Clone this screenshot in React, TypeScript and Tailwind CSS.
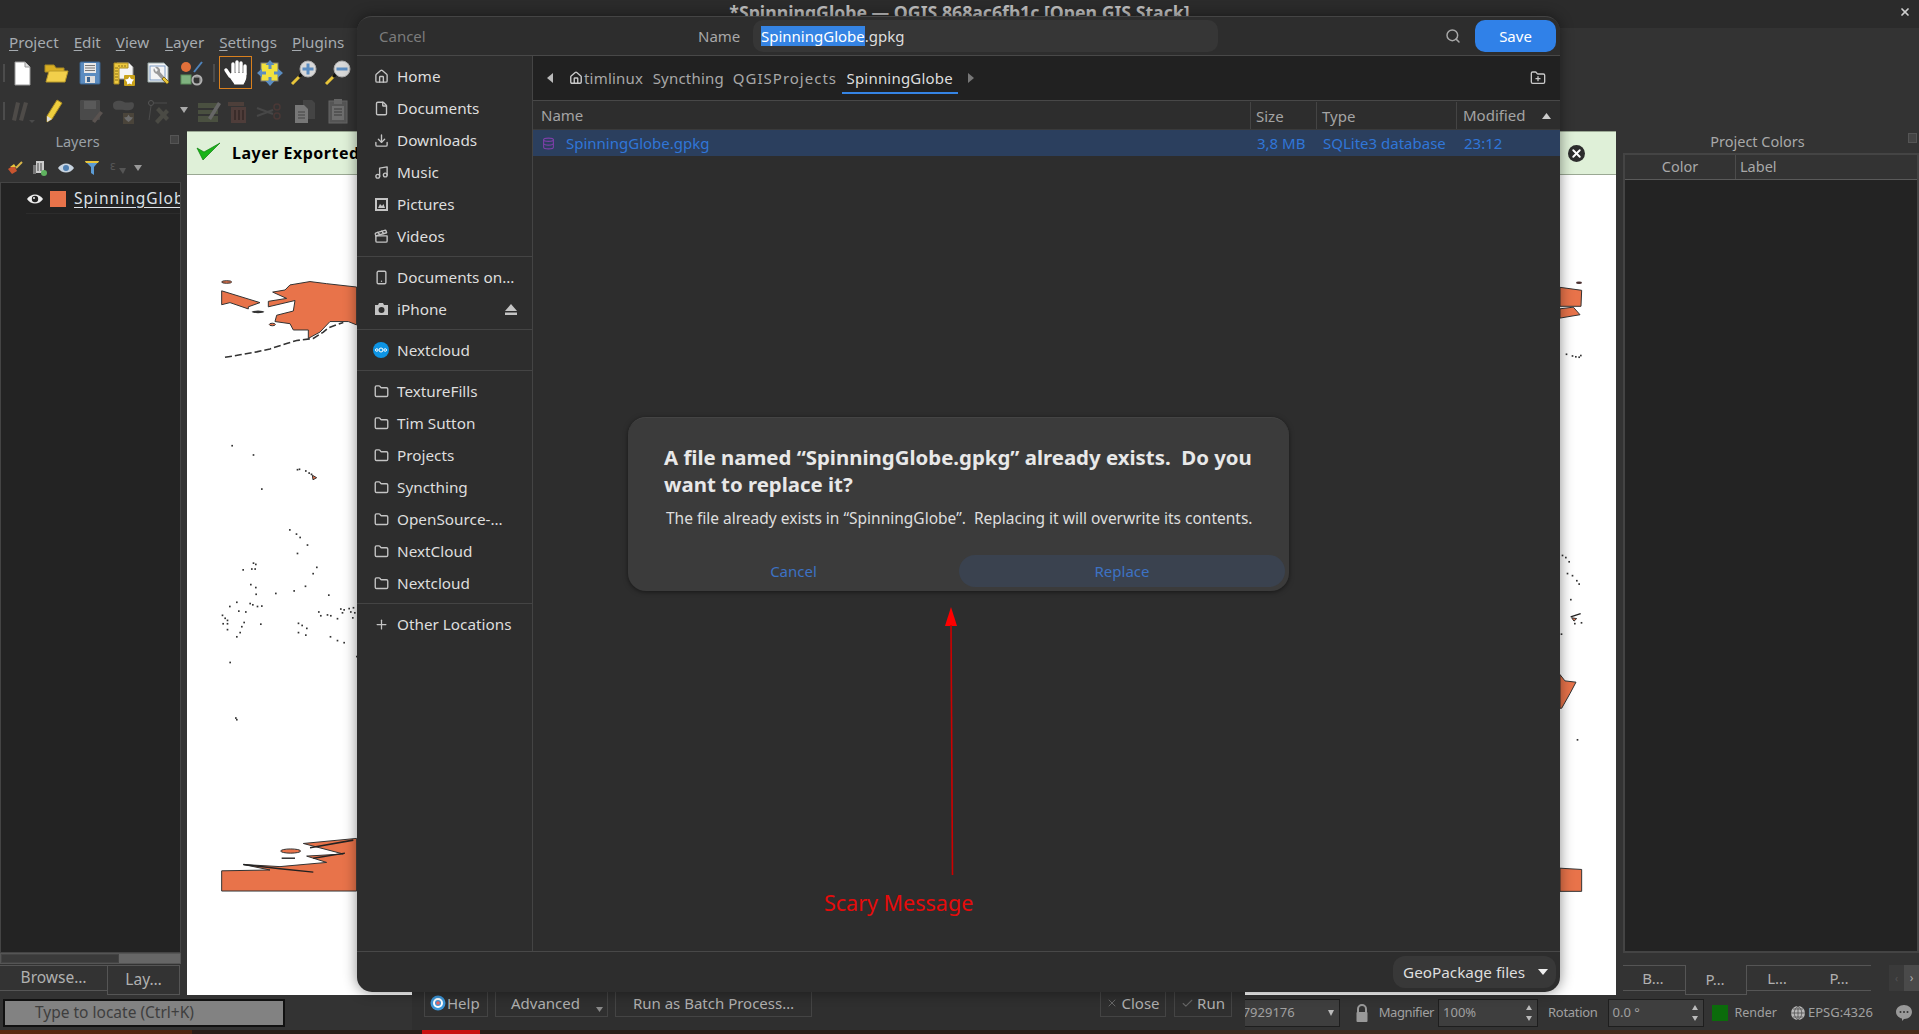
import React from "react";
import { House, File, Download, Music, Smartphone, Folder, Plus, Search, FolderPlus, Database, X, Check, Clapperboard } from "lucide-react";

const FONT = "[font-family:'Noto_Sans','Open_Sans',sans-serif]";

const MAP_DOTS: [number, number][] = [[154,463],[218,485],[243,566],[327,663],[347,673],[358,681],[380,699],[350,719],[408,752],[397,767],[218,742],[225,745],[187,758],[213,756],[223,756],[210,793],[225,800],[226,816],[285,814],[340,808],[374,797],[444,818],[208,838],[216,841],[230,845],[243,844],[147,845],[168,835],[174,856],[195,858],[125,866],[133,873],[140,878],[127,886],[140,886],[190,883],[183,893],[240,887],[178,907],[140,900],[168,917],[353,885],[364,890],[378,897],[353,907],[375,913],[414,858],[420,867],[440,865],[450,867],[470,874],[480,851],[490,853],[505,850],[518,848],[510,858],[522,860],[485,860],[516,872],[449,917],[470,926],[490,931],[528,964],[148,978],[165,1110],[168,1114],[350,520],[356,519],[375,523],[385,528],[392,531]];
const MAP_DOTS_R: [number, number][] = [[47,222],[65,226],[75,228],[85,229],[90,225],[35,700],[45,705],[55,715],[50,743],[65,748],[78,760],[85,768],[60,805],[32,887],[80,1138],[92,860],[72,862]];

function WorldMap() {
  const shape = "fill-[#e8734a] stroke-[#333]";
  return (
    <svg className="absolute left-0 top-0 h-[864px] w-[1428px]" viewBox="187 131 1428 864">
      <g transform="translate(180 250) scale(0.3333 0.4209)">
        <polygon vectorEffect="non-scaling-stroke" className={shape} points="278,100 315,95 330,83 390,75 440,80 530,88 530,178 505,170 450,170 420,195 385,210 385,190 340,190 330,175 285,170 290,155 340,145 345,120 265,135 265,122 320,115" />
        <polygon vectorEffect="non-scaling-stroke" className={shape} points="125,97 240,125 205,135 205,140 150,125 125,130" />
        <ellipse vectorEffect="non-scaling-stroke" className={shape} cx="140" cy="76" rx="15" ry="3" />
        <ellipse vectorEffect="non-scaling-stroke" cx="234" cy="147" rx="19" ry="3" fill="#333" />
        <ellipse vectorEffect="non-scaling-stroke" cx="277" cy="177" rx="9" ry="3" fill="#e8734a" stroke="#333" />
        <polyline vectorEffect="non-scaling-stroke" fill="none" stroke="#333" strokeWidth="1.6" strokeDasharray="7 3" points="135,255 180,249 230,242 270,235 320,222 350,215 400,210 430,195 445,185 490,172" />
        <polygon vectorEffect="non-scaling-stroke" className={shape} points="397,535 410,541 399,546" />
        <polygon vectorEffect="non-scaling-stroke" className={shape} points="125,1475 270,1473 190,1460 300,1465 440,1455 380,1440 490,1435 370,1410 530,1398 530,1523 125,1523" />
        <ellipse vectorEffect="non-scaling-stroke" className={shape} cx="332" cy="1428" rx="30" ry="5" />
        <polyline vectorEffect="non-scaling-stroke" fill="none" stroke="#222" strokeWidth="1.4" points="190,1460 300,1470 400,1478" />
        <polyline vectorEffect="non-scaling-stroke" fill="none" stroke="#222" strokeWidth="1.6" points="390,1420 420,1416 520,1402" />
        <polyline vectorEffect="non-scaling-stroke" fill="none" stroke="#222" strokeWidth="1.4" points="400,1445 495,1433" />
        <polyline vectorEffect="non-scaling-stroke" fill="none" stroke="#222" strokeWidth="1.4" points="305,1445 345,1445" />
        {MAP_DOTS.map(([x, y], i) => (
          <rect key={i} x={x} y={y} width="5" height="4" fill="#333" />
        ))}
      </g>
      <g transform="translate(1550 260) scale(0.3333 0.4209)">
        <polygon vectorEffect="non-scaling-stroke" className={shape} points="30,65 95,72 93,110 30,110" />
        <polygon vectorEffect="non-scaling-stroke" className={shape} points="30,116 70,112 90,130 30,138" />
        <ellipse vectorEffect="non-scaling-stroke" cx="87" cy="54" rx="9" ry="3" fill="#4a3030" />
        <polygon vectorEffect="non-scaling-stroke" className={shape} points="30,985 45,1000 78,1003 60,1030 35,1065 30,1065" />
        <polygon vectorEffect="non-scaling-stroke" className={shape} points="65,850 80,852 72,858" />
        <polyline vectorEffect="non-scaling-stroke" fill="none" stroke="#222" strokeWidth="1.4" points="62,848 92,840" />
        <polygon vectorEffect="non-scaling-stroke" className={shape} points="30,1445 95,1448 95,1500 30,1500" />
        {MAP_DOTS_R.map(([x, y], i) => (
          <rect key={i} x={x} y={y} width="5" height="4" fill="#333" />
        ))}
      </g>
    </svg>
  );
}

function Sep() {
  return <div className="h-[18px] w-[2px] bg-[#4c4c4c]" />;
}

function Cell({ children, className = "" }: { children?: React.ReactNode; className?: string }) {
  return <div className={`flex h-[34px] w-[34px] shrink-0 items-center justify-center ${className}`}>{children}</div>;
}

function Ic({ children, w = 26 }: { children: React.ReactNode; w?: number }) {
  return (
    <svg width={w} height={26} viewBox={`0 0 ${w} 26`}>
      {children}
    </svg>
  );
}

function ZoomIcon({ minus }: { minus?: boolean }) {
  return (
    <Ic w={30}>
      <line x1="3" y1="24" x2="11" y2="16" stroke="#e8c53a" strokeWidth="3" />
      <line x1="10" y1="17" x2="13" y2="14" stroke="#111" strokeWidth="3" />
      <circle cx="19" cy="9" r="8" fill="#d8d8d8" stroke="#aaa" />
      <rect x="13.5" y="7.5" width="11" height="3" fill="#5b8cc0" />
      {!minus && <rect x="17.5" y="3.5" width="3" height="11" fill="#5b8cc0" />}
    </Ic>
  );
}

function HandIcon() {
  const fingers = "M7 17L3 11M10 14V5M14 13V3M18 13V4M22 15V7";
  return (
    <svg width="26" height="28" viewBox="0 0 26 28">
      <path d={fingers} stroke="#333" strokeWidth="5.4" strokeLinecap="round" fill="none" />
      <path d="M6 14h18v4c0 4-2 5-3 8H11c-1-3-4-5-5-8z" fill="#fff" stroke="#333" strokeWidth="1.2" />
      <path d={fingers} stroke="#fff" strokeWidth="3.4" strokeLinecap="round" fill="none" />
      <path d="M8 14h14v6H8z" fill="#fff" />
    </svg>
  );
}

function Toolbar1() {
  return (
    <div className="flex h-[35px] items-center pl-[2px]">
      <div className="flex w-[3px] justify-center"><Sep /></div>
      <Cell>
        <Ic><path d="M6 2h10l5 5v18H6z" fill="#fff" stroke="#999" /><path d="M16 2v5h5" fill="#ddd" stroke="#999" /></Ic>
      </Cell>
      <Cell>
        <Ic><path d="M2 5h9l2 3h8v4H2z" fill="#d9ae22" stroke="#a98a22" /><path d="M3 22h19l3-11H6z" fill="#f2cf4b" stroke="#b99a2a" /></Ic>
      </Cell>
      <Cell>
        <Ic>
          <rect x="3" y="2" width="20" height="22" rx="1" fill="#5b8cc0" stroke="#3c648f" />
          <rect x="7" y="3" width="12" height="10" fill="#e8e8e8" />
          <path d="M8 5.5h10M8 8h10M8 10.5h10" stroke="#777" />
          <rect x="8" y="16" width="10" height="7" fill="#ddd" />
          <rect x="10" y="17" width="3" height="5" fill="#3c648f" />
        </Ic>
      </Cell>
      <Cell>
        <Ic>
          <path d="M6 3h12l4 4v12H6z" fill="#f4f4f4" stroke="#999" />
          <path d="M3 3h14v5h-9v16H3z" fill="#eec93e" stroke="#a98a22" />
          <path d="M4 8h3M4 11h3M4 14h3M4 17h3M4 20h3M8 5v2M11 5v2M14 5v2" stroke="#8a701c" />
          <rect x="13" y="15" width="11" height="11" rx="1" fill="#c9a21a" />
          <path d="M18.5 16.5l1.5 2.5 3 .5-2 2.5-.2 2.5-2.3-1-2.3 1-.2-2.5-2-2.5 3-.5z" fill="#fff" />
        </Ic>
      </Cell>
      <Cell>
        <Ic>
          <path d="M3 3h16l4 4v15H3z" fill="#f4f4f4" stroke="#9aa" />
          <rect x="5" y="6" width="15" height="14" fill="none" stroke="#7d9cc5" />
          <path d="M9 8a4 4 0 0 0 3 6l7 8 3-2-7-8a4 4 0 0 0-5-5l3 3-2 2z" fill="#999" />
          <path d="M17 19l5 5 2-2-5-5z" fill="#e8c53a" stroke="#8a701c" />
        </Ic>
      </Cell>
      <Cell>
        <Ic>
          <circle cx="7" cy="7" r="5" fill="#e2703a" />
          <line x1="15" y1="12" x2="23" y2="2" stroke="#4f84bd" strokeWidth="2" />
          <rect x="2" y="15" width="10" height="9" fill="#7fb27f" stroke="#5c8d5c" />
          <circle cx="18" cy="20" r="4.5" fill="none" stroke="#b0b0b0" strokeWidth="2" />
          <path d="M16 17h4M21 16v8" stroke="#b0b0b0" />
        </Ic>
      </Cell>
      <div className="flex w-[9px] justify-center"><Sep /></div>
      <div className="mx-[1px] flex h-[33px] w-[33px] items-center justify-center border border-[#d9801e]">
        <HandIcon />
      </div>
      <Cell>
        <Ic>
          <rect x="4" y="3" width="17" height="18" fill="#f2e13d" stroke="#7a7a7a" />
          <path d="M13 0l4.500 5h-9zM13 26l-4.500-5h9zM0 13l5-4.500v9zM26 13l-5 4.500v-9z" fill="#5b8cc0" />
          <path d="M13 4v5M13 17v5M4 13h5M17 13h5" stroke="#5b8cc0" strokeWidth="3" />
        </Ic>
      </Cell>
      <Cell><ZoomIcon /></Cell>
      <Cell><ZoomIcon minus /></Cell>
    </div>
  );
}

function Toolbar2() {
  return (
    <div className="flex h-[41px] items-center pl-[2px]">
      <div className="flex w-[3px] justify-center"><Sep /></div>
      <Cell>
        <Ic><path d="M3 22l4-18 4 1-4 18zM10 22l5-18 4 1-5 18z" fill="#4e4b48" /><path d="M20 22h6l-3 3z" fill="#4a4a4a" /></Ic>
      </Cell>
      <Cell>
        <Ic><path d="M14 2l5 3-10 16-5 3 0-6z" fill="#efcf3e" stroke="#a98a22" /><path d="M4 18l0 6 5-3z" fill="#ddd" /></Ic>
      </Cell>
      <Cell>
        <Ic>
          <rect x="3" y="2" width="20" height="20" rx="1" fill="#4a4a4a" />
          <rect x="7" y="3" width="12" height="8" fill="#5a5a5a" />
          <path d="M15 23l8-10 3 2-8 10z" fill="#5a5350" />
        </Ic>
      </Cell>
      <Cell>
        <Ic>
          <path d="M2 7c0-5 8-5 11-3s10-2 10 3-5 6-10 5-11 2-11-5z" fill="#4c4c4c" />
          <rect x="12" y="15" width="11" height="11" fill="#4a443a" />
          <path d="M17.5 16.5l1.5 2.5 3 .5-2 2.5-2.5 2-2.5-2-2-2.5 3-.5z" fill="#6c6c6c" />
        </Ic>
      </Cell>
      <Cell>
        <Ic>
          <circle cx="6" cy="5" r="2.5" fill="none" stroke="#555" />
          <path d="M8 5h14M6 8l-2 14" stroke="#4c4c4c" />
          <path d="M10 23l11-12 3 3-11 12zM11 12l3-3 10 11-3 3z" fill="#4a4a44" />
        </Ic>
      </Cell>
      <div className="relative w-[28px] shrink-0">
        <svg className="absolute left-[4px] top-[-5px]" width="10" height="8" viewBox="0 0 10 8"><path d="M1 1h8l-4 6z" fill="#aaa" /></svg>
      </div>
      <Cell className="-ml-[11px]">
        <Ic><path d="M2 5h20v19H2z" fill="#4a5040" /><path d="M2 11h20M2 17h20" stroke="#333" strokeWidth="2" /><path d="M12 20L22 4l3 2-10 16z" fill="#666" /></Ic>
      </Cell>
      <Cell className="-ml-[6px]">
        <Ic><path d="M4 4h16v4H4z" fill="#4d3f3a" /><path d="M7 9h15v16H7z" fill="#4f3d3a" /><path d="M11 12v10M15 12v10M19 12v10" stroke="#3a2c2a" strokeWidth="2" /></Ic>
      </Cell>
      <Cell className="-ml-[2px]">
        <Ic><path d="M1 10l16 6M1 18l16-6" stroke="#474747" strokeWidth="2" /><circle cx="21" cy="9" r="3" fill="none" stroke="#4a3836" strokeWidth="1.5" /><circle cx="21" cy="18" r="3" fill="none" stroke="#4a3836" strokeWidth="1.5" /></Ic>
      </Cell>
      <Cell className="ml-[1px]">
        <Ic><path d="M12 2h9l3 3v16H12z" fill="#444" /><path d="M4 7h9l4 4v14H4z" fill="#777" /><path d="M7 14h7M7 17h7M7 20h7" stroke="#444" /></Ic>
      </Cell>
      <Cell>
        <Ic><rect x="4" y="3" width="18" height="22" fill="#555" stroke="#666" /><rect x="9" y="1" width="8" height="5" fill="#666" /><rect x="7" y="8" width="12" height="14" fill="#6e6e6e" /><path d="M9 11h8M9 14h8M9 17h8" stroke="#3a3a3a" /></Ic>
      </Cell>
    </div>
  );
}

function MenuBar() {
  const items: [string, string, string][] = [
    ["P", "roject", "ml-[9px]"],
    ["E", "dit", "ml-[15px]"],
    ["V", "iew", "ml-[15px]"],
    ["L", "ayer", "ml-[16px]"],
    ["S", "ettings", "ml-[15px]"],
    ["P", "lugins", "ml-[15px]"],
  ];
  return (
    <div className="flex h-[27px] items-center pt-[2px] text-[15.200px] text-[#a6abb0]">
      {items.map(([a, b, m]) => (
        <span key={a + b} className={m}>
          <span className="underline underline-offset-2">{a}</span>
          {b}
        </span>
      ))}
    </div>
  );
}

function LeftPanel() {
  return (
    <div className="flex h-full w-[181px] shrink-0 flex-col">
      <div className="relative flex h-[22px] items-center justify-center pr-[26px] text-[14.500px] text-[#9aa0a6]">
        Layers
        <span className="absolute right-[2px] top-[4px] h-[9px] w-[9px] border border-[#555] bg-[#444]" />
      </div>
      <div className="flex h-[29px] items-center gap-[9px] pl-[7px]">
        <svg width="16" height="14" viewBox="0 0 16 14"><path d="M1 8l6-4 3 6-5 3z" fill="#c9552f" /><path d="M9 7l6-6" stroke="#d8b64a" strokeWidth="2" /><path d="M3 6l4-3 2 3z" fill="#e8c53a" /></svg>
        <svg width="16" height="16" viewBox="0 0 16 16"><rect x="4" y="1" width="8" height="12" fill="#ccc" /><path d="M6 3v8M9 3v8" stroke="#444" /><rect x="1" y="5" width="3" height="9" fill="#777" /><circle cx="12" cy="13" r="3" fill="#5fb35f" /></svg>
        <svg width="18" height="14" viewBox="0 0 18 14"><path d="M1 7c4-6 12-6 16 0-4 6-12 6-16 0z" fill="#c8d4e0" /><circle cx="9" cy="7" r="3" fill="#4f7fb0" /></svg>
        <svg width="17" height="16" viewBox="0 0 17 16"><path d="M1 1h14l-5 6v8l-3-2V7z" fill="#5b9bd5" /><path d="M1 1h14l-1 2H2z" fill="#e8c53a" /></svg>
        <svg width="18" height="16" viewBox="0 0 18 16"><text x="0" y="10" fontSize="12" fill="#555">ε</text><path d="M9 8h7l-3 6z" fill="#555" /></svg>
        <svg className="-ml-[3px]" width="8" height="6" viewBox="0 0 8 6"><path d="M0 0h8l-4 6z" fill="#999" /></svg>
      </div>
      <div className="flex flex-1 flex-col overflow-hidden border border-[#444] bg-[#232323]">
        <div className="ml-[25px] flex h-[31px] items-center border-b border-[#2c2c2c] pt-[1px]">
          <svg className="shrink-0" width="18" height="12" viewBox="0 0 18 12"><path d="M1 6c4-6 12-6 16 0-4 6-12 6-16 0z" fill="#eee" /><circle cx="9" cy="6" r="3.2" fill="#222" /><circle cx="8" cy="5" r="1" fill="#eee" /></svg>
          <span className="ml-[6px] h-[16px] w-[16px] shrink-0 bg-[#e8734a]" />
          <span className="ml-[8px] shrink-0 whitespace-nowrap text-[15.500px] tracking-[1px] text-[#dde2e8] underline underline-offset-[3px]">SpinningGlobe</span>
        </div>
      </div>
      <div className="h-[11px] border border-[#555] bg-[#666] p-[0px]">
        <div className="h-full w-[118px] border border-[#444] bg-[#3a3a3a]" />
      </div>
      <div className="mt-[1px] flex h-[30px] items-start text-[15.500px] text-[#b0b0b0]">
        <div className="flex h-[26px] w-[107px] items-center justify-center border-y border-[#555]">Browse…</div>
        <div className="flex h-[30px] w-[73px] items-center justify-center border-x border-b border-t border-[#555]">Lay…</div>
      </div>
    </div>
  );
}

function RightPanel() {
  const tabs = ["B…", "P…", "L…", "P…"];
  return (
    <div className="flex h-full w-[296px] shrink-0 flex-col">
      <div className="relative flex h-[22px] items-center justify-center pr-[27px] text-[14.500px] text-[#a8a8a8]">
        Project Colors
        <span className="absolute right-[2px] top-[2px] h-[10px] w-[9px] border border-[#555] bg-[#444]" />
      </div>
      <div className="flex flex-1 flex-col border-2 border-[#444] bg-[#232323]">
        <div className="flex h-[25px] border-b border-[#5a5a5a] bg-[#333] text-[14.500px] text-[#a8a8a8]">
          <div className="flex w-[111px] items-center justify-center border-r border-[#4c4c4c]">Color</div>
          <div className="flex items-center pl-[4px]">Label</div>
        </div>
      </div>
      <div className="mt-[12px] flex h-[30px] items-start text-[15px] text-[#b0b0b0]">
        {tabs.map((t, i) => (
          <div
            key={i}
            className={
              i === 1
                ? "flex h-[30px] w-[62px] items-center justify-center border-x border-b border-[#555] pr-[2px]"
                : "flex h-[26px] w-[62px] items-center justify-center border-y border-[#555] pr-[2px]"
            }
          >
            {t}
          </div>
        ))}
        <div className="ml-[18px] flex h-[26px] w-[30px] text-[#888]">
          <div className="flex flex-1 items-center justify-center bg-[#3a3a3a] text-[10px] text-[#555]">‹</div>
          <div className="flex flex-1 items-center justify-center bg-[#4a4a4a] text-[12px] text-[#aaa]">›</div>
        </div>
      </div>
    </div>
  );
}

function MapCanvas() {
  return (
    <div className="relative ml-[6px] mr-[7px] flex-1 overflow-hidden bg-white">
      <WorldMap />
      <div className="relative flex h-[44px] items-center border-y border-[#9aa893] bg-[#dff0d8] pl-[45px] text-[16px] font-bold tracking-[0.5px] text-black">
        <svg className="absolute left-[8px] top-[9px]" width="26" height="20" viewBox="0 0 26 20">
          <path d="M2 7l6 12L25 2 9 11z" fill="#18b418" stroke="#0d7d0d" strokeWidth="0.7" />
        </svg>
        Layer Exported
        <div className="absolute left-[1381px] top-[13px] flex h-[17px] w-[17px] items-center justify-center rounded-full bg-[#2d2d2d]">
          <X size={13} strokeWidth={3.5} color="#fff" />
        </div>
      </div>
    </div>
  );
}

function Spin({ w, text, chevron }: { w: string; text: string; chevron?: boolean }) {
  return (
    <div className={`flex h-[28px] items-center justify-between border border-[#1e1e1e] bg-[#3e3e3e] pl-[4px] pr-[5px] text-[13px] text-[#a0a0a0] ${w}`}>
      <span>{text}</span>
      {chevron ? (
        <svg width="6" height="6" viewBox="0 0 6 6"><path d="M0 0h6L3 6z" fill="#bbb" /></svg>
      ) : (
        <svg width="6" height="20" viewBox="0 0 6 20"><path d="M3 2l3 5H0zM3 18l3-5H0z" fill="#bbb" /></svg>
      )}
    </div>
  );
}

function StatusBar() {
  return (
    <div className="flex h-[35px] items-center pr-[6px] pt-[1px] text-[13px] text-[#a0a0a0]">
      <div className="ml-[3px] flex h-[28px] w-[282px] items-center border-2 border-[#111] bg-[#828282] pl-[30px] text-[15.500px] text-[#3e3e3e]">
        Type to locate (Ctrl+K)
      </div>
      <div className="ml-auto flex items-center">
        <Spin w="w-[102px]" text="7929176" chevron />
        <svg className="ml-[13px]" width="18" height="20" viewBox="0 0 18 20">
          <path d="M5 10V6a4 4 0 0 1 8 0v4" fill="none" stroke="#999" strokeWidth="2" />
          <rect x="3.500" y="9" width="11" height="10" rx="1" fill="#999" />
        </svg>
        <span className="ml-[8px] tracking-[-0.4px]">Magnifier</span>
        <Spin w="ml-[4px] w-[100px]" text="100%" />
        <span className="ml-[10px] tracking-[-0.3px]">Rotation</span>
        <Spin w="ml-[10px] w-[96px]" text="0.0 °" />
        <span className="ml-[8px] h-[16px] w-[16px] bg-[#0b6b0b]" />
        <span className="ml-[7px] text-[12.500px]">Render</span>
        <svg className="ml-[13px]" width="16" height="16" viewBox="0 0 16 16"><circle cx="8" cy="8" r="7" fill="#b8b8b8" /><path d="M1 8h14M8 1v14M3 4h10M3 12h10M8 1c-5 4-5 10 0 14M8 1c5 4 5 10 0 14" stroke="#444" strokeWidth="0.7" fill="none" /></svg>
        <span className="ml-[2px] w-[66px]">EPSG:4326</span>
        <svg className="ml-[21px]" width="18" height="18" viewBox="0 0 18 18"><path d="M9 1c4.5 0 8 3 8 7s-3.5 7-8 7l-2 2 0-2.400C3.500 13.600 1 11.300 1 8c0-4 3.500-7 8-7z" fill="#999" /><circle cx="5.500" cy="8" r="1" fill="#333" /><circle cx="9" cy="8" r="1" fill="#333" /><circle cx="12.500" cy="8" r="1" fill="#333" /></svg>
      </div>
    </div>
  );
}

function ProcessingBar() {
  const btn = "flex h-[25px] items-center border-x border-b border-[#444] pb-[2px]";
  return (
    <div className="absolute left-[412px] top-[992px] flex h-[38px] w-[833px] items-start bg-[#2f2f2f] pl-[12px] pr-[13px] text-[15px] text-[#aeaeae]">
      <div className={`${btn} w-[64px] pl-[5px]`}>
        <svg width="16" height="16" viewBox="0 0 16 16"><circle cx="8" cy="8" r="7.500" fill="#3d96d8" /><circle cx="8" cy="8" r="4" fill="none" stroke="#fff" strokeWidth="2" /><circle cx="8" cy="8" r="1.800" fill="#e66" /></svg>
        <span className="ml-[1px]">Help</span>
      </div>
      <div className={`${btn} relative ml-[7px] w-[113px] pl-[15px]`}>
        Advanced
        <svg className="absolute bottom-[4px] right-[4px]" width="7" height="5" viewBox="0 0 7 5"><path d="M0 0h7L3.500 5z" fill="#888" /></svg>
      </div>
      <div className={`${btn} ml-[7px] w-[197px] justify-center`}>Run as Batch Process…</div>
      <div className={`${btn} ml-auto w-[66px] justify-center gap-[3px]`}>
        <X size={12} className="text-[#666]" />
        Close
      </div>
      <div className={`${btn} ml-[8px] w-[58px] justify-center gap-[3px]`}>
        <Check size={13} className="text-[#666]" />
        Run
      </div>
    </div>
  );
}

function Place({ icon, label, right }: { icon: React.ReactNode; label: string; right?: React.ReactNode }) {
  return (
    <div className="flex h-[32px] items-center pl-[16px] pr-[15px] text-[15.300px] text-[#dedede]">
      <span className="flex w-[16px] justify-center text-[#c4c4c4]">{icon}</span>
      <span className="ml-[8px] flex-1 whitespace-nowrap">{label}</span>
      {right}
    </div>
  );
}

function Divider() {
  return <div className="my-[4px] h-px bg-[#444]" />;
}

function Sidebar() {
  const s = { size: 15, strokeWidth: 2.2 };
  const folders = ["TextureFills", "Tim Sutton", "Projects", "Syncthing", "OpenSource-…", "NextCloud", "Nextcloud"];
  return (
    <div className="w-[176px] shrink-0 border-r border-[#444] pt-[4px]">
      <Place icon={<House {...s} />} label="Home" />
      <Place icon={<File {...s} />} label="Documents" />
      <Place icon={<Download {...s} />} label="Downloads" />
      <Place icon={<Music {...s} />} label="Music" />
      <Place
        icon={
          <svg width="15" height="15" viewBox="0 0 15 15"><path fillRule="evenodd" d="M1 1h13v13H1zM3 3v9h9V3z" fill="#c4c4c4" /><path d="M4 11l2-4 2 2 1.500-2 1.500 4z" fill="#c4c4c4" /></svg>
        }
        label="Pictures"
      />
      <Place icon={<Clapperboard {...s} />} label="Videos" />
      <Divider />
      <Place icon={<Smartphone {...s} />} label="Documents on…" />
      <Place
        icon={
          <svg width="15" height="14" viewBox="0 0 15 14"><path fillRule="evenodd" d="M1 3h3l1-2h4l1 2h4v10H1zM7.500 5a3 3 0 1 0 0 6 3 3 0 0 0 0-6z" fill="#c4c4c4" /></svg>
        }
        label="iPhone"
        right={<svg width="12" height="11" viewBox="0 0 12 11"><path d="M6 0l6 7H0zM0 8.500h12V11H0z" fill="#c4c4c4" /></svg>}
      />
      <Divider />
      <Place
        icon={
          <svg width="16" height="16" viewBox="0 0 16 16"><circle cx="8" cy="8" r="8" fill="#0d94e4" /><circle cx="8" cy="8" r="2" fill="none" stroke="#fff" /><circle cx="3.800" cy="8" r="1.300" fill="none" stroke="#fff" /><circle cx="12.200" cy="8" r="1.300" fill="none" stroke="#fff" /></svg>
        }
        label="Nextcloud"
      />
      <Divider />
      {folders.map((f, i) => (
        <Place key={i} icon={<Folder {...s} />} label={f} />
      ))}
      <Divider />
      <Place icon={<Plus size={15} strokeWidth={2} />} label="Other Locations" />
    </div>
  );
}

function FileMain() {
  const crumbs = "px-[4.500px] text-[#a8a8a8]";
  return (
    <div className="flex min-w-0 flex-1 flex-col">
      <div className="flex h-[45px] items-center border-b border-[#484848] bg-[#212121] text-[15px] tracking-[0.2px]">
        <svg className="ml-[14px]" width="6" height="10" viewBox="0 0 6 10"><path d="M6 0v10L0 5z" fill="#bbb" /></svg>
        <House size={14} strokeWidth={2.400} className="ml-[16px] text-[#c8c8c8]" />
        <span className="pl-[1px] pr-[5px] text-[#a8a8a8]">timlinux</span>
        <span className={crumbs}>Syncthing</span>
        <span className={`${crumbs} tracking-[1px]`}>QGISProjects</span>
        <div className="relative flex h-full items-center px-[5px] text-[#dedede]">
          SpinningGlobe
          <div className="absolute bottom-[6px] left-0 right-0 h-[2px] bg-[#3584e4]" />
        </div>
        <svg className="ml-[10px]" width="6" height="10" viewBox="0 0 6 10"><path d="M0 0v10l6-5z" fill="#777" /></svg>
        <FolderPlus size={16} strokeWidth={2} className="ml-auto mr-[14px] text-[#c8c8c8]" />
      </div>
      <div className="flex h-[29px] items-center border-b border-[#3a3a3a] pt-[1px] text-[15px] text-[#a4a4a4]">
        <div className="w-[717px] pl-[8px]">Name</div>
        <div className="h-full w-[66px] border-l border-[#444] pl-[5px] pt-[3px]">Size</div>
        <div className="h-full w-[140px] border-l border-[#444] pl-[5px] pt-[3px]">Type</div>
        <div className="flex h-full flex-1 items-center justify-between border-l border-[#444] pl-[6px] pr-[9px]">
          Modified
          <svg width="9" height="6" viewBox="0 0 9 6"><path d="M4.500 0L9 6H0z" fill="#ccc" /></svg>
        </div>
      </div>
      <div className="flex h-[26px] items-center bg-[#2b3f5e] text-[15px] text-[#3076d8]">
        <div className="flex w-[717px] items-center pl-[9px]">
          <Database size={13} className="text-[#7d3fa8]" />
          <span className="ml-[11px]">SpinningGlobe.gpkg</span>
        </div>
        <div className="w-[66px] pl-[7px]">3,8 MB</div>
        <div className="w-[140px] whitespace-nowrap pl-[7px]">SQLite3 database</div>
        <div className="flex-1 pl-[8px]">23:12</div>
      </div>
      <div className="flex-1" />
    </div>
  );
}

function SaveDialog() {
  return (
    <div className={`absolute left-[357px] top-[16px] flex h-[976px] w-[1203px] flex-col overflow-hidden rounded-[15px] border-t border-[#444] bg-[#2d2d2d] shadow-[0_0_14px_rgba(0,0,0,0.45)] ${FONT}`}>
      <div className="flex h-[39px] shrink-0 items-center border-b border-[#484848] pl-[22px] pr-[4px] text-[15px] text-[#dedede]">
        <span className="w-[319px] text-[#7c7c7c]">Cancel</span>
        <span className="w-[55px] text-[#a8a8a8]">Name</span>
        <div className="flex h-[32px] w-[465px] items-center rounded-[10px] bg-[#363636] pl-[8px]">
          <span className="bg-[#3584e4] leading-[20px] text-white">SpinningGlobe</span>
          <span>.gpkg</span>
        </div>
        <Search size={16} strokeWidth={2.200} className="ml-auto mr-[14px] text-[#a8a8a8]" />
        <div className="flex h-[32px] w-[81px] items-center justify-center rounded-[10px] bg-[#3081e8] text-white">Save</div>
      </div>
      <div className="flex min-h-0 flex-1">
        <Sidebar />
        <FileMain />
      </div>
      <div className="flex h-[41px] shrink-0 items-center justify-end border-t border-[#484848] pr-[4px]">
        <div className="flex h-[32px] w-[163px] items-center justify-between rounded-[12px] bg-[#383838] pl-[10px] pr-[8px] text-[15.300px] text-[#dedede]">
          GeoPackage files
          <svg width="10" height="6" viewBox="0 0 10 6"><path d="M0 0h10L5 6z" fill="#eee" /></svg>
        </div>
      </div>
    </div>
  );
}

function ConfirmModal() {
  return (
    <div className={`absolute left-[628px] top-[417px] flex h-[174px] w-[661px] flex-col rounded-[18px] border-t border-[#444] bg-[#3b3b3b] shadow-[0_1px_5px_rgba(0,0,0,0.5)] ${FONT}`}>
      <div className="pl-[36px] pr-[30px] pt-[26px] text-[20.400px] font-bold leading-[27px] text-[#e8e8e8]">
        A file named “SpinningGlobe.gpkg” already exists.&nbsp; Do you want to replace it?
      </div>
      <div className="whitespace-nowrap pl-[38px] pt-[9px] text-[15.500px] leading-[22px] text-[#dedede]">
        The file already exists in “SpinningGlobe”.&nbsp; Replacing it will overwrite its contents.
      </div>
      <div className="mt-auto flex items-center pb-[4px] pr-[4px] text-[15px] text-[#3d72c4]">
        <div className="flex h-[32px] w-[331px] items-center justify-center">Cancel</div>
        <div className="flex h-[32px] flex-1 items-center justify-center rounded-[16px] bg-[#3a424f]">Replace</div>
      </div>
    </div>
  );
}

function Annotation() {
  return (
    <>
      <svg className="absolute left-[940px] top-[600px]" width="24" height="280" viewBox="0 0 24 280">
        <path d="M11 7l6 19H5z" fill="#f00" />
        <line x1="11" y1="25" x2="12.500" y2="275" stroke="#c00" strokeWidth="1.600" />
      </svg>
      <div className={`absolute left-[824px] top-[888px] text-[21.500px] leading-[30px] text-[#e60b0b] ${FONT}`}>Scary Message</div>
    </>
  );
}

export default function App() {
  return (
    <div className={`relative flex h-[1034px] w-[1919px] flex-col overflow-hidden bg-[#333333] ${FONT}`}>
      <div className="relative flex h-[28px] shrink-0 items-start justify-center bg-[#2b2b2b] text-[17.700px] font-bold leading-[24px] text-[#bdbdbd]">
        *SpinningGlobe — QGIS 868ac6fb1c [Open GIS Stack]
        <X size={12} strokeWidth={3.500} className="absolute right-[8px] top-[6px] text-[#cfcfcf]" />
      </div>
      <MenuBar />
      <Toolbar1 />
      <Toolbar2 />
      <div className="flex min-h-0 flex-1">
        <LeftPanel />
        <MapCanvas />
        <RightPanel />
      </div>
      <StatusBar />
      <div className="h-[4px] shrink-0 bg-[linear-gradient(90deg,#5a2810_0%,#4d2410_10%,#2a1c18_10%,#2a1c18_22%,#c81010_22%,#c81010_25%,#2a1c18_25%,#2a1c18_62%,#3a2a20_62%,#4a2a18_100%)]" />
      <ProcessingBar />
      <SaveDialog />
      <ConfirmModal />
      <Annotation />
    </div>
  );
}
